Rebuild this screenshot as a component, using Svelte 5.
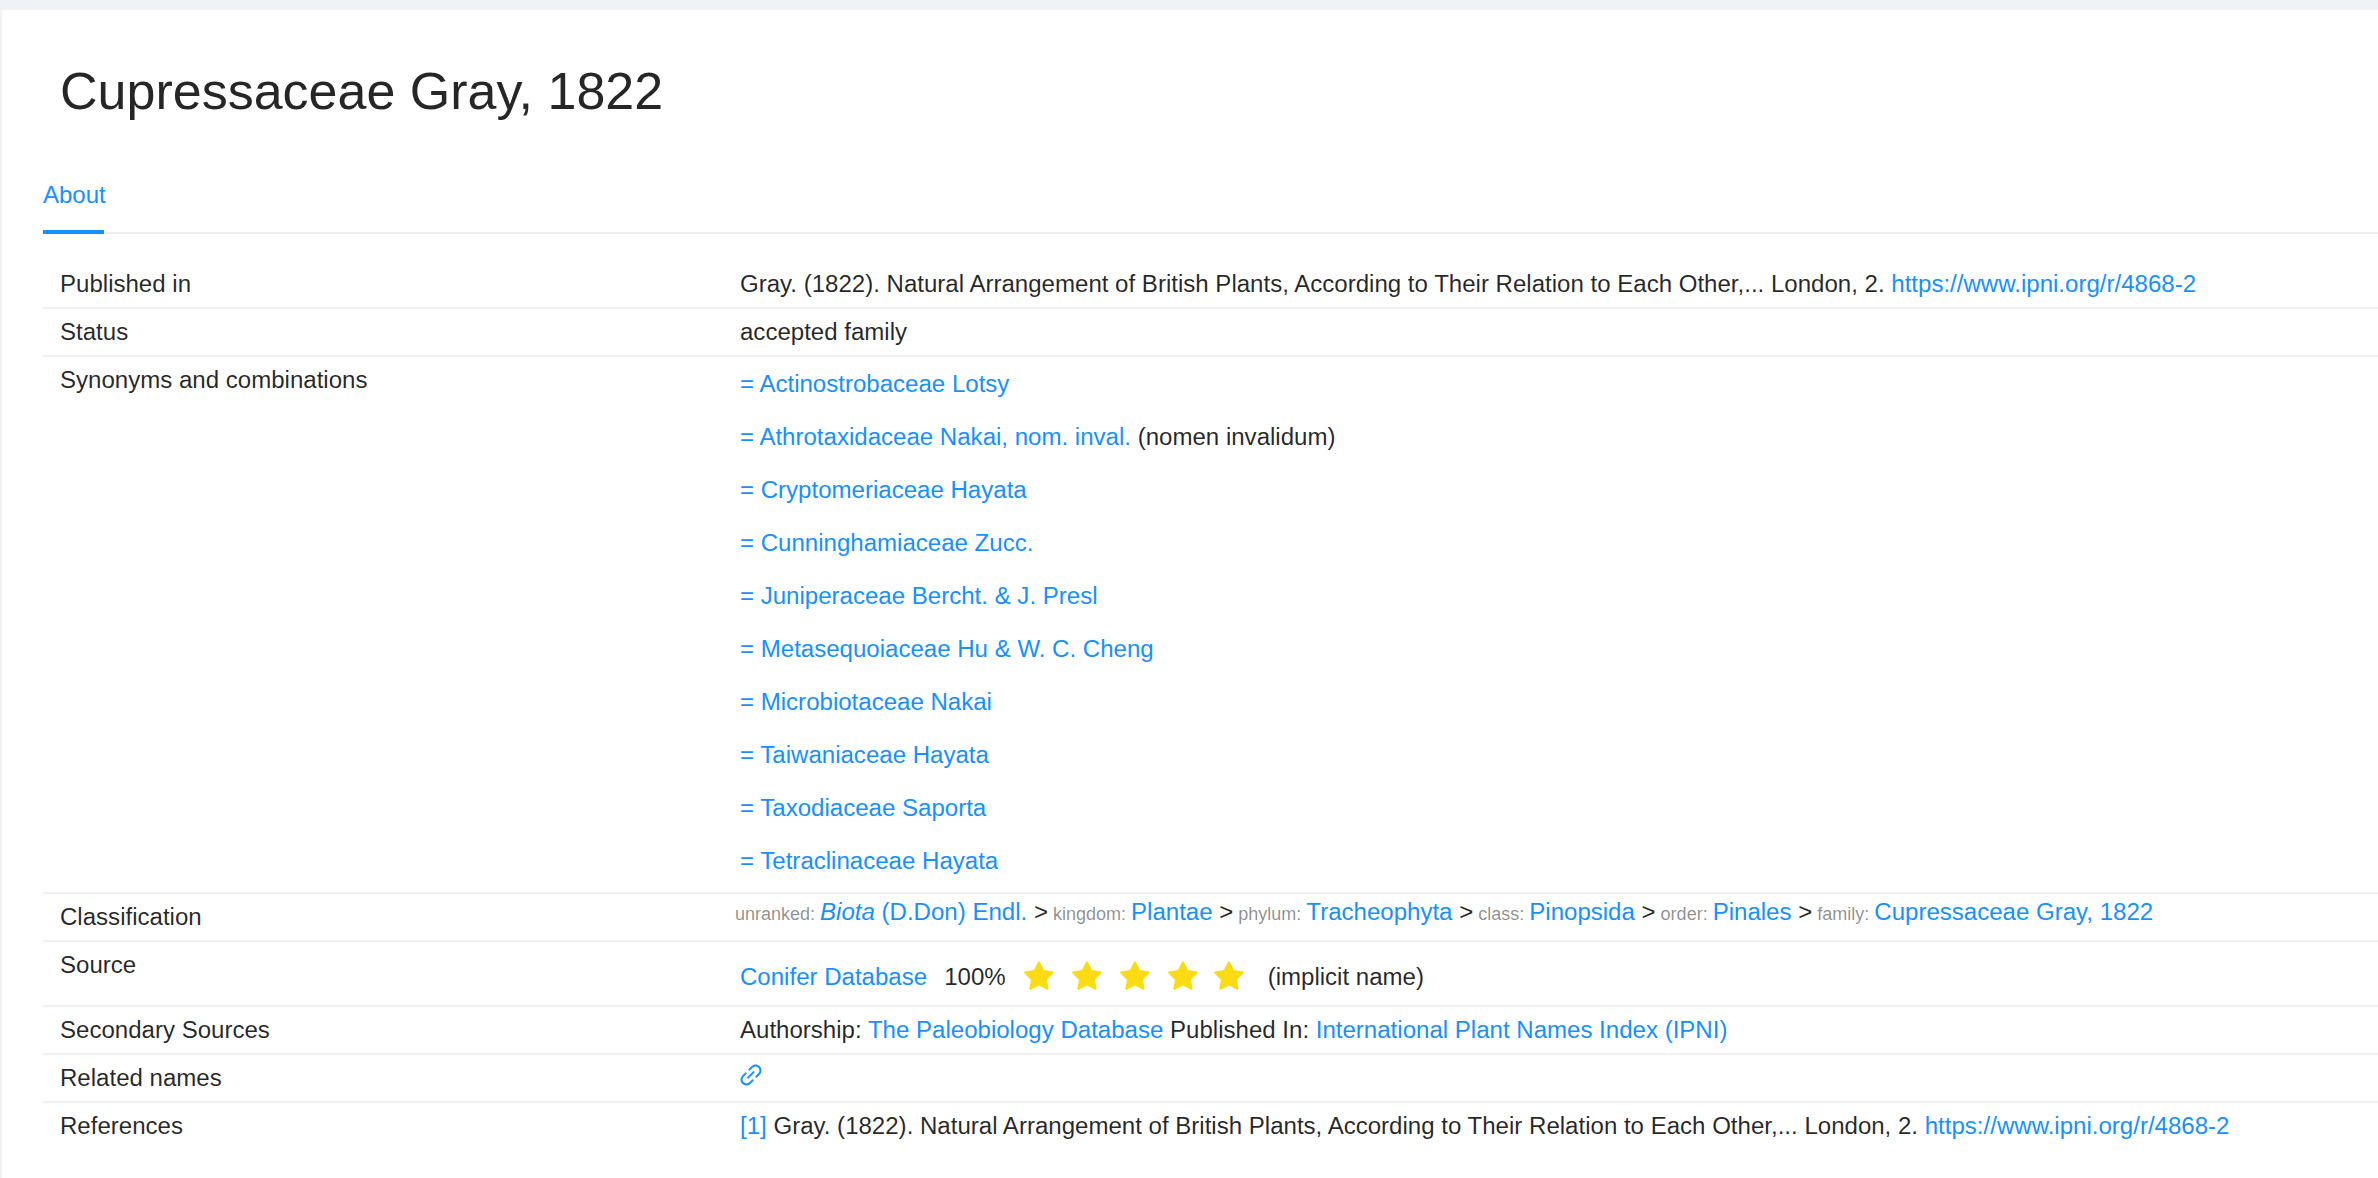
<script>
  const synonyms = [
    ["= Actinostrobaceae Lotsy"],
    ["= Athrotaxidaceae Nakai, nom. inval.", "(nomen invalidum)"],
    ["= Cryptomeriaceae Hayata"],
    ["= Cunninghamiaceae Zucc."],
    ["= Juniperaceae Bercht. & J. Presl"],
    ["= Metasequoiaceae Hu & W. C. Cheng"],
    ["= Microbiotaceae Nakai"],
    ["= Taiwaniaceae Hayata"],
    ["= Taxodiaceae Saporta"],
    ["= Tetraclinaceae Hayata"]
  ];
  const ranks = [
    ["kingdom:", "Plantae"],
    ["phylum:", "Tracheophyta"],
    ["class:", "Pinopsida"],
    ["order:", "Pinales"],
    ["family:", "Cupressaceae Gray, 1822"]
  ];
  const citation = "Gray. (1822). Natural Arrangement of British Plants, According to Their Relation to Each Other,... London, 2.";
  const url = "https://www.ipni.org/r/4868-2";
</script>

<main class="page">
  <h1>Cupressaceae Gray, 1822</h1>

  <div class="tabs">
    <a class="tab" href="#about">About</a>
  </div>

  <section class="rows" id="about">
    <div class="row">
      <div class="label">Published in</div>
      <div class="value">{citation} <a href="#r">{url}</a></div>
    </div>
    <div class="row">
      <div class="label">Status</div>
      <div class="value">accepted family</div>
    </div>
    <div class="row synonyms-row">
      <div class="label">Synonyms and combinations</div>
      <div class="value synonyms">
        {#each synonyms as [name, note]}
          <div class="synonym"><a href="#s">{name}</a>{#if note}&nbsp;{note}{/if}</div>
        {/each}
      </div>
    </div>
    <div class="row">
      <div class="label">Classification</div>
      <div class="value classification">
        <span class="rank">unranked:&nbsp;</span><a href="#c"><i>Biota</i> (D.Don) Endl.</a>
        {#each ranks as [rank, name]}
          <span class="sep">&gt;</span><span class="rank">&nbsp;{rank}&nbsp;</span><a href="#c">{name}</a>{" "}
        {/each}
      </div>
    </div>
    <div class="row source-row">
      <div class="label">Source</div>
      <div class="value source">
        <a href="#d">Conifer Database</a>
        <span class="pct">100%</span>
        <span class="stars">
          {#each [0, 1, 2, 3, 4] as i}
            <svg viewBox="0 0 1024 1024" width="36" height="36" aria-hidden="true">
              <path d="M908 353l-254-37L541 86c-3-6-8-11-15-14-16-8-35-2-43 14L370 316l-254 37c-7 1-14 4-19 9-12 13-12 33 1 46l184 179-44 253c-1 7 0 14 3 20 8 16 28 22 43 14l227-120 227 120c6 3 13 4 20 3 17-3 29-20 26-37l-44-253 184-179c5-5 8-12 9-19 3-17-9-33-25-36z" fill="#fadb14" />
            </svg>
          {/each}
        </span>
        <span>(implicit name)</span>
      </div>
    </div>
    <div class="row">
      <div class="label">Secondary Sources</div>
      <div class="value">Authorship: <a href="#p">The Paleobiology Database</a> Published In: <a href="#i">International Plant Names Index (IPNI)</a></div>
    </div>
    <div class="row">
      <div class="label">Related names</div>
      <div class="value">
        <svg class="link" viewBox="0 0 1024 1024" width="28" height="28" aria-hidden="true">
          <path d="M574 665a8 8 0 0 0-11 0L447 781c-54 54-144 59-203 0-59-59-54-149 0-203l116-116a8 8 0 0 0 0-11l-40-40a8 8 0 0 0-11 0L193 527c-85 85-85 222 0 306 85 85 222 85 306 0l116-116a8 8 0 0 0 0-11l-41-41zm258-472c-85-85-222-85-306 0L409 309a8 8 0 0 0 0 11l40 40a8 8 0 0 0 11 0l116-116c54-54 144-59 203 0 59 59 54 149 0 203L663 563a8 8 0 0 0 0 11l41 41a8 8 0 0 0 11 0l116-116c85-85 85-222 1-306zM610 363a8 8 0 0 0-11 0L363 599a8 8 0 0 0 0 11l40 40a8 8 0 0 0 11 0l236-236a8 8 0 0 0 0-11l-40-40z" fill="#1890ff" />
        </svg>
      </div>
    </div>
    <div class="row last">
      <div class="label">References</div>
      <div class="value"><a href="#1">[1]</a>&nbsp;{citation} <a href="#r">{url}</a></div>
    </div>
  </section>
</main>

<style>
  :global(body) {
    margin: 0;
    background: #f0f2f5;
    font-family: "Liberation Sans", Arial, sans-serif;
    color: #000000d9;
  }

  .page {
    margin-top: 10px;
    margin-left: 2px;
    height: 1168px;
    background: #fff;
    padding: 0 0 0 41px;
    box-sizing: border-box;
    overflow: hidden;
  }

  h1 {
    margin: 0;
    padding: 51px 0 0 17px;
    font-size: 52px;
    font-weight: 400;
    line-height: 60px;
    color: #000000d9;
  }

  a {
    color: #1890ff;
    text-decoration: none;
  }

  .tabs {
    margin-top: 55px;
    border-bottom: 2px solid #f0f0f0;
    height: 56px;
  }

  .tab {
    display: inline-block;
    line-height: 32px;
    font-size: 24px;
    padding-top: 3px;
    border-bottom: 4px solid #1890ff;
    height: 51px;
    width: 61px;
  }

  .rows {
    margin-top: 27px;
    font-size: 24.05px;
    line-height: 32px;
    color: #000000d9;
  }

  .row {
    display: grid;
    grid-template-columns: 680px 1fr;
    padding: 7px 17px;
    border-bottom: 2px solid #f0f0f0;
    min-height: 32px;
  }

  .row.last {
    border-bottom: 0;
  }

  .value {
    white-space: nowrap;
  }

  .synonyms-row {
    padding-bottom: 15px;
  }

  .synonyms {
    margin-top: 4px;
  }

  .synonym {
    margin-bottom: 21px;
  }

  .synonym:last-child {
    margin-bottom: 0;
  }

  .rank {
    font-size: 18px;
    color: #00000073;
  }

  .classification {
    margin-left: -5px;
    margin-top: -5px;
    height: 32px;
  }

  .source-row {
    padding-bottom: 12px;
  }

  .source {
    display: flex;
    align-items: center;
    height: 32px;
    margin-top: 12px;
  }

  .pct {
    margin-left: 17px;
  }

  .stars {
    display: flex;
    gap: 12px;
    margin: 0 21px 0 15px;
  }

  .stars svg:last-child {
    margin-left: -2px;
  }

  .link {
    display: block;
    margin: -1px 0 1px -3px;
  }
</style>
